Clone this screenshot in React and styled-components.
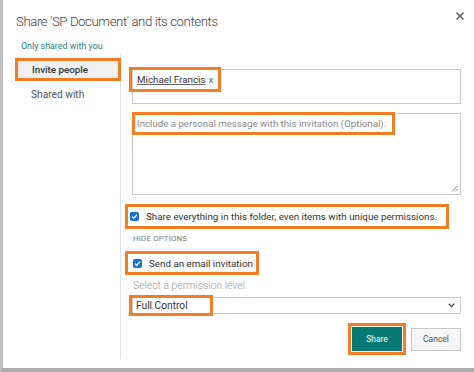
import React from "react";
import styled, { createGlobalStyle } from "styled-components";

const ORANGE = "#f47d23";
const TEAL = "#047a73";

const GlobalStyle = createGlobalStyle`
  html, body {
    margin: 0;
    padding: 0;
    background: #ffffff;
  }
  body {
    font-family: Roboto, "Open Sans", "Liberation Sans", sans-serif;
    color: #333;
  }
  * { box-sizing: border-box; }
`;

const Frame = styled.div`
  width: 474px;
  height: 372px;
  border-left: 3px solid #c2c2c2;
  border-bottom: 4px solid #ababab;
  background: #fff;
  display: flex;
  flex-direction: column;
  overflow: hidden;
`;

const Header = styled.div`
  height: 38px;
  padding: 5px 9px 0 13px;
  display: flex;
  align-items: center;
  justify-content: space-between;
`;

const Title = styled.h1`
  margin: 0;
  font-size: 13.2px;
  font-weight: 300;
  color: #444;
  letter-spacing: -0.4px;
`;

const CloseButton = styled.button`
  border: 0;
  background: none;
  padding: 0;
  width: 10px;
  height: 10px;
  margin-top: -12px;
  display: flex;
  align-items: center;
  justify-content: center;
  cursor: pointer;
`;

const SubLink = styled.div`
  height: 16px;
  line-height: 16px;
  padding-left: 18px;
  font-size: 8.9px;
  color: #1f7f8a;
`;

const Body = styled.div`
  flex: 1;
  display: flex;
  padding-bottom: 9px;
`;

const Nav = styled.nav`
  width: 118px;
  padding: 4px 0 0 12px;
  border-right: 1px solid #e2e2e2;
  display: flex;
  flex-direction: column;
`;

const NavItem = styled.div`
  height: ${({ $active }) => ($active ? "23px" : "22px")};
  margin-top: ${({ $active }) => ($active ? "0" : "2px")};
  display: flex;
  align-items: center;
  padding-left: ${({ $active }) => ($active ? "14px" : "16px")};
  font-size: ${({ $active }) => ($active ? "9.8px" : "10.2px")};
  font-weight: ${({ $active }) => ($active ? 500 : 400)};
  color: ${({ $active }) => ($active ? "#333" : "#555")};
  background: ${({ $active }) => ($active ? "#efefef" : "transparent")};
  border: ${({ $active }) => ($active ? `3px solid ${ORANGE}` : "0")};
  margin-right: -1px;
`;

const Main = styled.div`
  flex: 1;
  padding: 15px 13px 0 11px;
  display: flex;
  flex-direction: column;
`;

const Field = styled.div`
  position: relative;
  border: 1px solid #c8c8c8;
  height: ${({ $h }) => $h}px;
  margin-top: ${({ $mt }) => $mt || 0}px;
`;

const Highlight = styled.div`
  display: flex;
  align-items: center;
  border: 3px solid ${ORANGE};
  height: ${({ $h }) => $h}px;
  width: ${({ $w }) => ($w ? `${$w}px` : "auto")};
  margin: ${({ $m }) => $m || 0};
  padding: ${({ $p }) => $p || 0};
  gap: ${({ $gap }) => $gap || 0}px;
  white-space: nowrap;
`;

const Person = styled.span`
  font-size: 9.8px;
  color: #333;
  text-decoration: underline;
  text-decoration-color: #666;
  text-underline-offset: 1px;
`;

const Remove = styled.span`
  font-size: 9.5px;
  color: #1f7f8a;
  margin-left: 3px;
`;

const Placeholder = styled.span`
  font-size: 9.7px;
  color: #8a8a8a;
`;

const Grip = styled.svg`
  position: absolute;
  right: 2px;
  bottom: 2px;
`;

const Box = styled.span`
  width: 9px;
  height: 9px;
  border-radius: 2px;
  background: #1a6fd6;
  display: inline-flex;
  align-items: center;
  justify-content: center;
  flex: none;
`;

const CheckLabel = styled.span`
  font-size: 9.8px;
  color: #333;
`;

const SectionLabel = styled.div`
  margin-top: 4px;
  padding-left: 1px;
  line-height: 12px;
  font-size: 7.8px;
  color: #777;
  letter-spacing: 0.2px;
`;

const FieldLabel = styled.div`
  margin-top: 4px;
  line-height: 14px;
  padding-left: 1px;
  font-size: 10.4px;
  font-weight: 300;
  color: #999;
`;

const Select = styled.div`
  margin-top: 4px;
  height: 17px;
  border: 1px solid #c8c8c8;
  display: flex;
  align-items: center;
  justify-content: space-between;
  padding-right: 5px;
`;

const SelectValue = styled.span`
  font-size: 10.2px;
  color: #333;
`;

const Actions = styled.div`
  margin-top: 9px;
  display: flex;
  justify-content: flex-end;
  align-items: center;
  gap: 5px;
`;

const ButtonFrame = styled.div`
  border: 3px solid ${ORANGE};
  padding: 1px;
`;

const Button = styled.button`
  width: 50px;
  height: ${({ $primary }) => ($primary ? "24px" : "23px")};
  border: 1px solid ${({ $primary }) => ($primary ? TEAL : "#c6c6c6")};
  background: ${({ $primary }) => ($primary ? TEAL : "#f6f6f6")};
  color: ${({ $primary }) => ($primary ? "#fff" : "#555")};
  font-family: inherit;
  font-size: 8.5px;
  padding: 0;
  display: block;
`;

function Check() {
  return (
    <Box>
      <svg width="7" height="7" viewBox="0 0 7 7">
        <path d="M1 3.6 L2.8 5.3 L6 1.6" fill="none" stroke="#fff" strokeWidth="1.3" />
      </svg>
    </Box>
  );
}

export default function App() {
  return (
    <>
      <GlobalStyle />
      <Frame>
        <Header>
          <Title>Share 'SP Document' and its contents</Title>
          <CloseButton aria-label="Close">
            <svg width="8" height="8" viewBox="0 0 8 8">
              <path d="M0.5 0.5 L7.5 7.5 M7.5 0.5 L0.5 7.5" stroke="#555" strokeWidth="1.3" />
            </svg>
          </CloseButton>
        </Header>
        <SubLink>Only shared with you</SubLink>
        <Body>
          <Nav>
            <NavItem $active>Invite people</NavItem>
            <NavItem>Shared with</NavItem>
          </Nav>
          <Main>
            <Field $h={35}>
              <Highlight $h={25} $w={92} $m="-3px 0 0 -4px" $p="0 0 0 5px">
                <Person>Michael Francis</Person>
                <Remove>x</Remove>
              </Highlight>
            </Field>
            <Field $h={82} $mt={9}>
              <Highlight $h={23} $w={263} $m="-2px 0 0 -1px" $p="0 0 0 2px">
                <Placeholder>Include a personal message with this invitation (Optional).</Placeholder>
              </Highlight>
              <Grip width="7" height="7" viewBox="0 0 7 7">
                <path d="M6.5 1 L1 6.5 M6.5 4 L4 6.5" stroke="#777" strokeWidth="0.9" />
              </Grip>
            </Field>
            <Highlight $h={25} $w={324} $m="9px 0 0 -7px" $p="0 0 0 2px" $gap={7}>
              <Check />
              <CheckLabel>Share everything in this folder, even items with unique permissions.</CheckLabel>
            </Highlight>
            <SectionLabel>HIDE OPTIONS</SectionLabel>
            <Highlight $h={24} $w={134} $m="6px 0 0 -7px" $p="0 0 0 5px" $gap={7}>
              <Check />
              <CheckLabel>Send an email invitation</CheckLabel>
            </Highlight>
            <FieldLabel>Select a permission level</FieldLabel>
            <Select>
              <Highlight $h={21} $w={84} $m="0 0 0 -4px" $p="0 0 0 4px">
                <SelectValue>Full Control</SelectValue>
              </Highlight>
              <svg width="7" height="5" viewBox="0 0 7 5">
                <path d="M0.8 0.8 L3.5 3.6 L6.2 0.8" fill="none" stroke="#444" strokeWidth="1.3" />
              </svg>
            </Select>
            <Actions>
              <ButtonFrame>
                <Button $primary>Share</Button>
              </ButtonFrame>
              <Button>Cancel</Button>
            </Actions>
          </Main>
        </Body>
      </Frame>
    </>
  );
}
